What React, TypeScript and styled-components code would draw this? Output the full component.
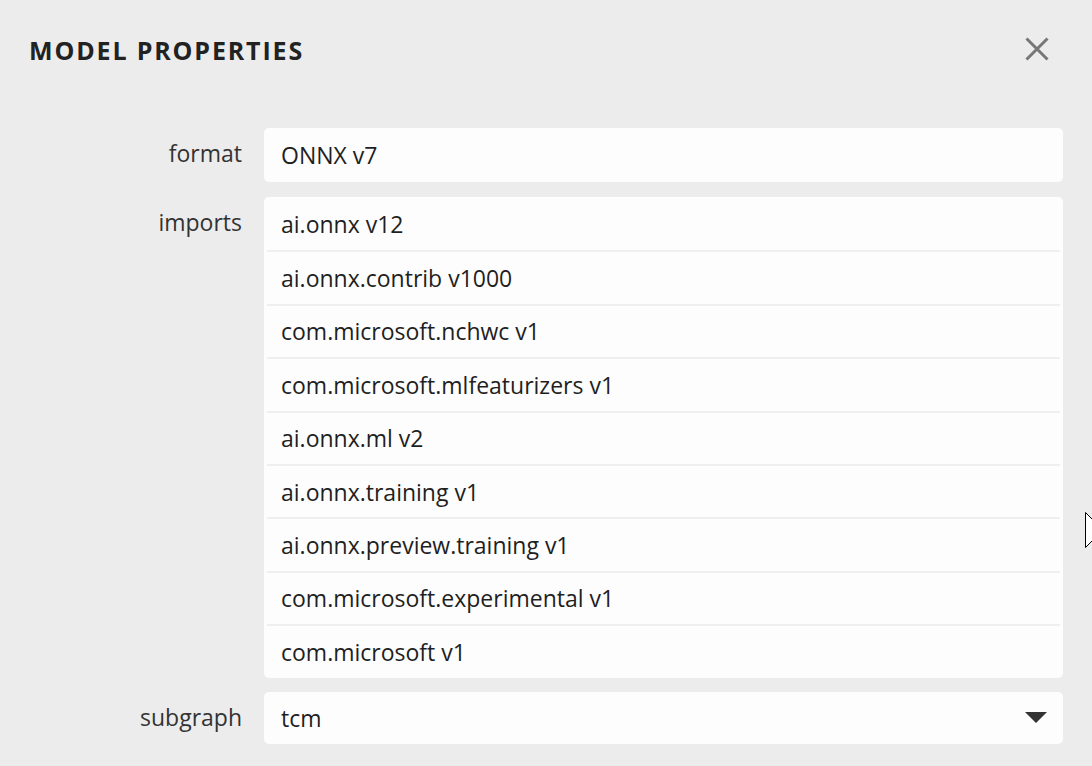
import React from "react";
import styled, { createGlobalStyle } from "styled-components";

const Global = createGlobalStyle`
  html, body {
    margin: 0;
    padding: 0;
    background: #ececec;
    overflow: hidden;
  }
  body {
    font-family: "Open Sans", "Noto Sans", sans-serif;
    color: #222;
  }
`;

const Page = styled.div`
  position: relative;
  width: 1092px;
  height: 766px;
  background: #ececec;
  box-sizing: border-box;
`;

const Header = styled.div`
  display: flex;
  align-items: center;
  justify-content: space-between;
  padding: 30px 41px 0 29px;
  height: 40px;
`;

const Title = styled.h1`
  margin: 0;
  font-family: "Open Sans", sans-serif;
  font-weight: 700;
  font-size: 25px;
  letter-spacing: 1.85px;
  color: #222;
  line-height: 40px;
`;

const CloseButton = styled.button`
  display: flex;
  align-items: center;
  justify-content: center;
  width: 28px;
  height: 28px;
  margin-top: -3px;
  padding: 0;
  border: none;
  background: transparent;
  cursor: pointer;
`;

const Grid = styled.div`
  display: grid;
  grid-template-columns: 213px 1fr;
  column-gap: 22px;
  padding: 58px 29px 0 29px;
`;

const Label = styled.div`
  text-align: right;
  font-size: 23px;
  line-height: 28px;
  padding-top: 11px;
  color: #333;
`;

const Box = styled.div<{ $gap?: number }>`
  background: #fdfdfd;
  border-radius: 5px;
  margin-bottom: ${(p) => p.$gap ?? 0}px;
`;

const Value = styled.div<{ $height: number }>`
  display: flex;
  align-items: center;
  height: ${(p) => p.$height}px;
  padding: 0 17px;
  font-size: 23px;
  color: #1f1f1f;
`;

const List = styled(Box)`
  padding: 0 3px;
`;

const ListRow = styled.div`
  display: flex;
  align-items: center;
  height: 51.4px;
  padding: 0 14px;
  font-size: 23px;
  color: #1f1f1f;
  border-top: 2px solid #efefef;
  &:first-child {
    border-top: none;
    height: 53.4px;
  }
`;

const Select = styled(Value)`
  justify-content: space-between;
  padding-right: 16px;
`;

const Cursor = styled.svg`
  position: absolute;
  left: 1085px;
  top: 512px;
`;

const imports = [
  "ai.onnx v12",
  "ai.onnx.contrib v1000",
  "com.microsoft.nchwc v1",
  "com.microsoft.mlfeaturizers v1",
  "ai.onnx.ml v2",
  "ai.onnx.training v1",
  "ai.onnx.preview.training v1",
  "com.microsoft.experimental v1",
  "com.microsoft v1",
];

export default function App() {
  return (
    <Page>
      <Global />
      <Header>
        <Title>MODEL PROPERTIES</Title>
        <CloseButton aria-label="close">
          <svg width="24" height="24" viewBox="0 0 24 24">
            <path d="M1.5 1.5 L22.5 22.5 M22.5 1.5 L1.5 22.5" stroke="#777" strokeWidth="3" />
          </svg>
        </CloseButton>
      </Header>
      <Grid>
        <Label>format</Label>
        <Box $gap={15}>
          <Value $height={54}>ONNX v7</Value>
        </Box>
        <Label>imports</Label>
        <List $gap={14}>
          {imports.map((i) => (
            <ListRow key={i}>{i}</ListRow>
          ))}
        </List>
        <Label>subgraph</Label>
        <Box>
          <Select $height={52}>
            <span>tcm</span>
            <svg width="22" height="11" viewBox="0 0 22 11">
              <polygon points="0,0 22,0 11,11" fill="#333" />
            </svg>
          </Select>
        </Box>
      </Grid>
      <Cursor width="8" height="37" viewBox="0 0 8 37">
        <polygon points="0.5,0.5 8,8 8,28 0.5,35.5" fill="#fff" stroke="#000" strokeWidth="1" />
      </Cursor>
    </Page>
  );
}
